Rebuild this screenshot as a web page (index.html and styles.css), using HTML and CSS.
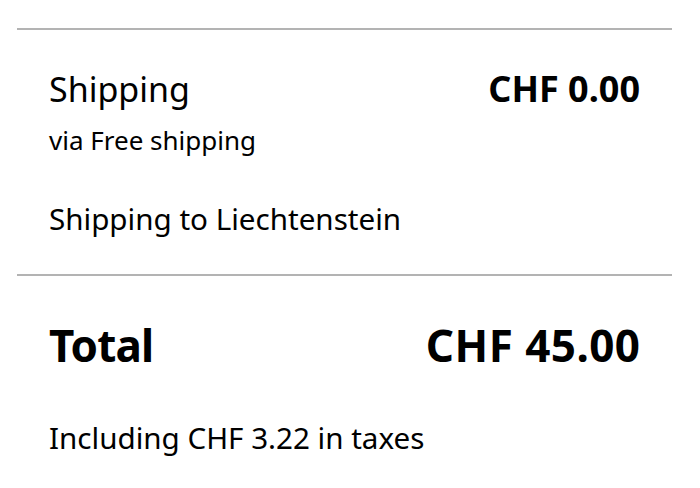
FILE: index.html
```html
<!DOCTYPE html>
<html lang="en">
<head>
<meta charset="utf-8">
<title>Order totals</title>
<link rel="stylesheet" href="styles.css">
</head>
<body>
<div class="totals">
  <section class="block shipping">
    <div class="row">
      <span class="label">Shipping</span>
      <span class="amount">CHF 0.00</span>
    </div>
    <div class="method">via Free shipping</div>
    <div class="destination">Shipping to Liechtenstein</div>
  </section>
  <section class="block total">
    <div class="row">
      <span class="total-label">Total</span>
      <span class="total-amount">CHF 45.00</span>
    </div>
    <div class="taxes">Including CHF 3.22 in taxes</div>
  </section>
</div>
</body>
</html>
```
FILE: styles.css
```css
html, body {
  margin: 0;
  padding: 0;
  background: #ffffff;
}
body {
  font-family: "Noto Sans", "Open Sans", sans-serif;
  color: #000000;
}
.totals {
  margin: 28px 28px 0 17px;
  width: 655px;
}
.block {
  border-top: 2px solid #b3b3b3;
  padding: 0 32px;
}
.row {
  display: flex;
  justify-content: space-between;
  align-items: baseline;
}
.shipping {
  padding-top: 37px;
  padding-bottom: 35px;
}
.label {
  font-size: 34px;
  line-height: 44px;
}
.amount {
  font-size: 36px;
  line-height: 44px;
  font-weight: 700;
}
.method {
  font-size: 26px;
  line-height: 40px;
  margin-top: 9px;
}
.destination {
  font-size: 29.6px;
  line-height: 40px;
  margin-top: 39px;
}
.total {
  padding-top: 41px;
}
.total-label, .total-amount {
  font-size: 44px;
  line-height: 56px;
  font-weight: 700;
}
.total-label {
  letter-spacing: -0.8px;
}
.total-amount {
  letter-spacing: 0.45px;
  margin-right: -0.45px;
}
.taxes {
  font-size: 29.6px;
  line-height: 40px;
  margin-top: 45px;
}
```
